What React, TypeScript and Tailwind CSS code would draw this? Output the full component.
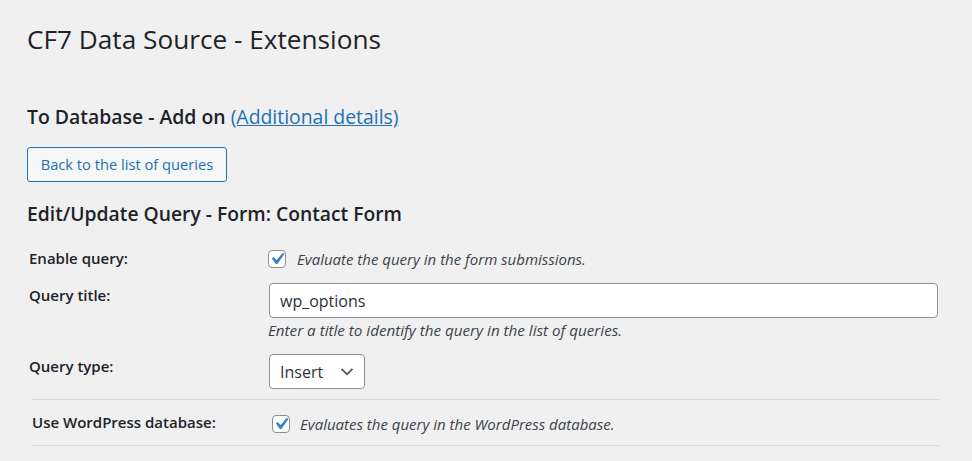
import React from "react";

function Check() {
  return (
    <span className="flex h-[18px] w-[18px] shrink-0 items-center justify-center overflow-visible rounded-[4px] border border-[#8c8f94] bg-white">
      <svg viewBox="0 0 20 20" className="-m-[4px] h-[24px] w-[24px] shrink-0 overflow-visible">
        <path d="M14.83 4.89l1.34.94-5.81 8.38H9.02L5.78 9.67l1.34-1.25 2.57 2.4z" fill="#3582c4" />
      </svg>
    </span>
  );
}

export default function App() {
  return (
    <div
      className="min-h-screen w-full bg-[#f0f0f1] pl-[27px] text-[#1d2327]"
      style={{ fontFamily: '"Open Sans", "Noto Sans", sans-serif' }}
    >
      <h1 className="pt-[23px] text-[26.2px] leading-[32px] font-normal">CF7 Data Source - Extensions</h1>

      <h2 className="mt-[50px] text-[19.4px] leading-[24px] font-semibold">
        To Database - Add on{" "}
        <a href="#" className="font-normal text-[#2271b1] underline">
          (Additional details)
        </a>
      </h2>

      <button className="mt-[18px] flex h-[35px] w-[200px] items-center justify-center rounded-[3px] border border-[#2271b1] bg-[#f6f7f7] text-[14.7px] text-[#2271b1]">
        Back to the list of queries
      </button>

      <h3 className="mt-[20px] text-[19.3px] leading-[24px] font-semibold">Edit/Update Query - Form: Contact Form</h3>

      <div className="mt-[22px] flex h-[22px] items-start">
        <div className="ml-[2px] w-[239px] text-[15px] leading-[20px] font-semibold">Enable query:</div>
        <div className="flex items-center pt-[2px]">
          <Check />
          <span className="ml-[11px] text-[15px] leading-[18px] italic text-[#3c434a]">
            Evaluate the query in the form submissions.
          </span>
        </div>
      </div>

      <div className="mt-[13px] flex items-start">
        <div className="ml-[2px] w-[239px] pt-[2px] text-[15px] leading-[20px] font-semibold">Query title:</div>
        <div className="flex flex-col">
          <div className="ml-[1px] flex h-[35px] w-[669px] items-center rounded-[4px] border border-[#8c8f94] bg-white px-[10px] text-[16px] text-[#2c3338]">
            wp_options
          </div>
          <div className="mt-[2px] text-[15.2px] leading-[20px] italic text-[#3c434a]">
            Enter a title to identify the query in the list of queries.
          </div>
        </div>
      </div>

      <div className="mt-[14px] flex items-start">
        <div className="ml-[2px] w-[239px] pt-[2px] text-[15px] leading-[20px] font-semibold">Query type:</div>
        <div className="relative ml-[1px] flex h-[35px] w-[96px] items-center rounded-[4px] border border-[#8c8f94] bg-white pl-[10px] text-[16px] text-[#2c3338]">
          Insert
          <svg viewBox="0 0 20 20" className="absolute right-[8px] top-[8px] h-[18px] w-[18px]">
            <path d="M5 6l5 5 5-5 2 1-7 7-7-7 2-1z" fill="#50575e" />
          </svg>
        </div>
      </div>

      <div className="ml-[4px] mt-[10px] w-[909px] border-t border-b border-[#dcdcde]">
        <div className="flex h-[45px] items-start">
          <div className="ml-[1px] w-[240px] pt-[12px] text-[15px] leading-[20px] font-semibold">Use WordPress database:</div>
          <div className="flex items-center pt-[15px]">
            <Check />
            <span className="ml-[10px] text-[15px] leading-[18px] italic text-[#3c434a]">
              Evaluates the query in the WordPress database.
            </span>
          </div>
        </div>
      </div>
    </div>
  );
}
